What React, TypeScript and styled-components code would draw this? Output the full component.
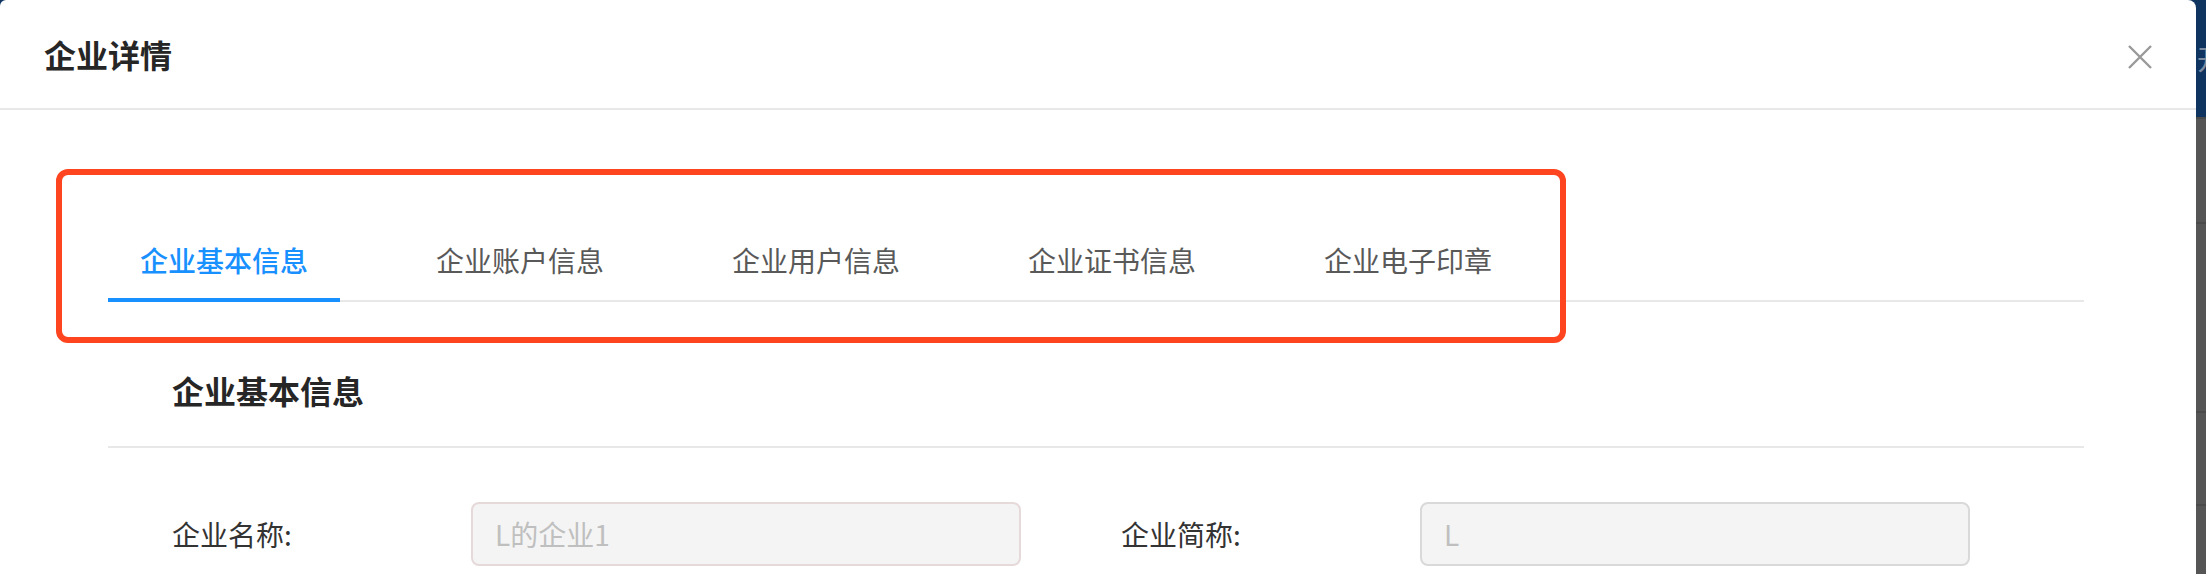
import styled, { createGlobalStyle } from 'styled-components';

const GlobalStyle = createGlobalStyle`
  html, body {
    margin: 0;
    padding: 0;
    height: 574px;
    overflow: hidden;
  }
  body {
    font-family: "Noto Sans CJK SC", "Noto Sans", sans-serif;
  }
`;

const Screen = styled.div`
  display: flex;
  height: 574px;
  background-color: #0f3460;
`;

const Modal = styled.div`
  flex: 0 0 2196px;
  background-color: #fff;
  border-radius: 6px 8px 0 0;
  display: flex;
  flex-direction: column;
  overflow: hidden;
`;

const Backdrop = styled.div`
  flex: 1;
  display: flex;
  flex-direction: column;
  overflow: hidden;
`;

const BackdropTop = styled.div`
  height: 117px;
  background-color: #0f3460;
  color: #7d8ba0;
  font-size: 28px;
  line-height: 117px;
  padding-left: 1px;
  white-space: nowrap;
`;

const BackdropRow = styled.div<{ $h: number }>`
  height: ${(p) => p.$h}px;
  flex: ${(p) => (p.$h ? '0 0 auto' : '1')};
  background-color: #555;
  border-top: 2px solid #4a4a4a;
`;

const Header = styled.header`
  height: 108px;
  flex: 0 0 auto;
  border-bottom: 2px solid #e8e8e8;
  display: flex;
  align-items: center;
  justify-content: space-between;
  padding: 0 44px;
`;

const Title = styled.h1`
  margin: 0;
  font-size: 32px;
  font-weight: 600;
  color: #262626;
  line-height: 48px;
`;

const CloseButton = styled.button`
  border: none;
  background: transparent;
  padding: 0;
  margin-top: 6px;
  width: 24px;
  height: 24px;
  display: flex;
  cursor: pointer;
`;

const Body = styled.div`
  padding: 105px 112px 0 108px;
`;

const TabsArea = styled.div`
  position: relative;
`;

const Highlight = styled.div`
  position: absolute;
  left: -52px;
  top: -46px;
  width: 1510px;
  height: 174px;
  box-sizing: border-box;
  border: 6px solid #ff4520;
  border-radius: 12px;
  pointer-events: none;
`;

const TabNav = styled.div`
  display: flex;
  gap: 64px;
  border-bottom: 2px solid #e8e8e8;
`;

const Tab = styled.div<{ $active?: boolean }>`
  padding: 24px 32px 17px;
  margin-bottom: -2px;
  font-size: 28px;
  line-height: 42px;
  white-space: nowrap;
  color: ${(p) => (p.$active ? '#1890ff' : '#595959')};
  font-weight: ${(p) => (p.$active ? 500 : 400)};
  border-bottom: 4px solid ${(p) => (p.$active ? '#1890ff' : 'transparent')};
`;

const SectionTitle = styled.h2`
  margin: 64px 0 0;
  padding: 0 0 32px 64px;
  font-size: 32px;
  line-height: 48px;
  font-weight: 600;
  color: #262626;
  border-bottom: 2px solid #e8e8e8;
`;

const FormGrid = styled.div`
  margin-top: 54px;
  padding-left: 64px;
  display: grid;
  grid-template-columns: repeat(2, 849px);
  column-gap: 100px;
`;

const Field = styled.div`
  display: flex;
  align-items: center;
`;

const Label = styled.label`
  width: 299px;
  flex: 0 0 auto;
  font-size: 28px;
  color: #333;
`;

const Input = styled.input<{ $tint?: boolean }>`
  width: 550px;
  height: 64px;
  box-sizing: border-box;
  border: 2px solid ${(p) => (p.$tint ? '#e6d9d9' : '#d9d9d9')};
  border-radius: 8px;
  background-color: #f4f4f4;
  color: #bfbfbf;
  padding: 0 22px;
  font-family: inherit;
  font-size: 28px;
  outline: none;
`;

const tabs = ['企业基本信息', '企业账户信息', '企业用户信息', '企业证书信息', '企业电子印章'];

const fields = [
  { label: '企业名称:', value: 'L的企业1', tint: true },
  { label: '企业简称:', value: 'L', tint: false },
];

export default function App() {
  return (
    <Screen>
      <GlobalStyle />
      <Modal>
        <Header>
          <Title>企业详情</Title>
          <CloseButton aria-label="close">
            <svg width="24" height="24" viewBox="0 0 24 24">
              <path d="M1 1 L23 23 M23 1 L1 23" stroke="#999" strokeWidth="2.4" fill="none" />
            </svg>
          </CloseButton>
        </Header>
        <Body>
          <TabsArea>
            <TabNav>
              {tabs.map((t, i) => (
                <Tab key={t} $active={i === 0}>
                  {t}
                </Tab>
              ))}
            </TabNav>
            <Highlight />
          </TabsArea>
          <SectionTitle>企业基本信息</SectionTitle>
          <FormGrid>
            {fields.map((f) => (
              <Field key={f.label}>
                <Label>{f.label}</Label>
                <Input $tint={f.tint} defaultValue={f.value} disabled />
              </Field>
            ))}
          </FormGrid>
        </Body>
      </Modal>
      <Backdrop>
        <BackdropTop>开</BackdropTop>
        <BackdropRow $h={103} />
        <BackdropRow $h={187} />
        <BackdropRow $h={91} />
        <BackdropRow $h={0} />
      </Backdrop>
    </Screen>
  );
}
